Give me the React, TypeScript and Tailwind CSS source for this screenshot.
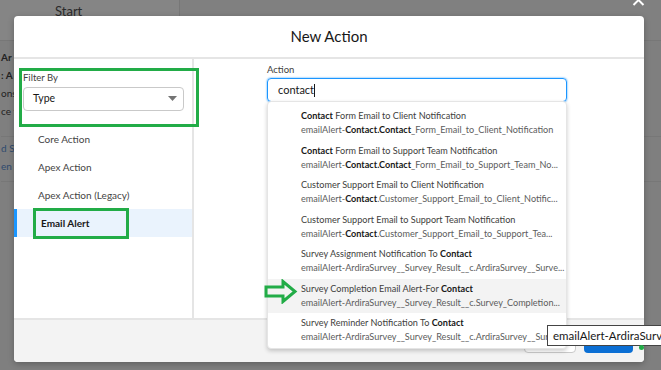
import React from "react";

const items: { title: React.ReactNode; sub: React.ReactNode; active?: boolean }[] = [
  {
    title: (<><b className="font-bold text-[#181818]">Contact</b> Form Email to Client Notification</>),
    sub: (<>emailAlert-<b className="font-bold text-[#181818]">Contact.Contact</b>_Form_Email_to_Client_Notification</>),
  },
  {
    title: (<><b className="font-bold text-[#181818]">Contact</b> Form Email to Support Team Notification</>),
    sub: (<>emailAlert-<b className="font-bold text-[#181818]">Contact.Contact</b>_Form_Email_to_Support_Team_No...</>),
  },
  {
    title: <>Customer Support Email to Client Notification</>,
    sub: (<>emailAlert-<b className="font-bold text-[#181818]">Contact</b>.Customer_Support_Email_to_Client_Notific...</>),
  },
  {
    title: <>Customer Support Email to Support Team Notification</>,
    sub: (<>emailAlert-<b className="font-bold text-[#181818]">Contact</b>.Customer_Support_Email_to_Support_Tea...</>),
  },
  {
    title: (<>Survey Assignment Notification To <b className="font-bold text-[#181818]">Contact</b></>),
    sub: <>emailAlert-ArdiraSurvey__Survey_Result__c.ArdiraSurvey__Surve...</>,
  },
  {
    title: (<>Survey Completion Email Alert-For <b className="font-bold text-[#181818]">Contact</b></>),
    sub: <>emailAlert-ArdiraSurvey__Survey_Result__c.Survey_Completion...</>,
    active: true,
  },
  {
    title: (<>Survey Reminder Notification To <b className="font-bold text-[#181818]">Contact</b></>),
    sub: <>emailAlert-ArdiraSurvey__Survey_Result__c.ArdiraSurvey__Surv</>,
  },
];

export default function App() {
  return (
    <div className="relative w-[661px] h-[370px] overflow-hidden bg-[#7f7f7f] font-['Lato',sans-serif] text-[#3e3e3c]">
      {/* background page */}
      <div className="flex h-[41px] border-b border-[#777]">
        <div className="w-[180px] border-r border-[#777] bg-[#858585] pl-[55px]">
          <span className="block mt-[2px] text-[13px] text-[#2a2a2a]">Start</span>
        </div>
        <div className="flex-1 bg-[#808080]" />
      </div>
      <div className="flex flex-col text-[10px] leading-none text-[#222] pl-[1px]">
        <span className="mt-[11px] font-bold">Ar</span>
        <span className="mt-[8px] font-bold">: A</span>
        <span className="mt-[8px]">ons</span>
        <span className="mt-[8px]">ce f</span>
        <span className="mt-[20px] pt-[6px] border-t border-[#777] text-[#2e4a6e]">d Sc</span>
        <span className="mt-[8px] pb-[10px] border-b border-[#777] text-[#2e4a6e]">en F</span>
      </div>

      {/* close X */}
      <svg className="absolute left-[632px] top-[-6px]" width="13" height="12" viewBox="0 0 13 12">
        <path d="M1.5 1 L11.5 11 M11.5 1 L1.5 11" stroke="#fff" strokeWidth="2" />
      </svg>

      {/* modal */}
      <div className="absolute left-[14px] top-[16px] w-[630px] h-[346px] bg-white rounded-[4px] shadow-[0_2px_6px_rgba(0,0,0,0.25)] flex flex-col">
        <div className="h-[43px] shrink-0 border-b-2 border-[#e5e5e5] flex items-center justify-center text-[15px] text-[#181818]">
          New Action
        </div>
        <div className="flex flex-1 min-h-0">
          {/* left column */}
          <div className="w-[180px] shrink-0 border-r-2 border-[#e5e5e5] pt-[9px]">
            <div className="ml-[5px] w-[180px] h-[59px] border-[3px] border-[#22ac47] pl-[1px] pt-[1px]">
              <div className="text-[9.5px] leading-[12px] text-[#3e3e3c]">Filter By</div>
              <div className="mt-[3px] w-[161px] h-[24px] border border-[#c9c9c9] rounded-[4px] flex items-center justify-between pl-[9px] pr-[6px] text-[10.5px] text-[#181818]">
                <span>Type</span>
                <svg width="9" height="6" viewBox="0 0 9 6"><path d="M0 0 L9 0 L4.5 5 Z" fill="#747474" /></svg>
              </div>
            </div>
            <div className="mt-[-2px] flex flex-col text-[10px] text-[#444]">
              <div className="h-[28px] flex items-center pl-[24px]">Core Action</div>
              <div className="h-[28px] flex items-center pl-[24px]">Apex Action</div>
              <div className="h-[28px] flex items-center pl-[24px]">Apex Action (Legacy)</div>
              <div className="relative h-[28px] flex items-center pl-[16px] bg-[#eaf3fd] border-l-[3px] border-[#1b96ff]">
                <span className="px-[5px] w-[96px] h-[31px] flex items-center border-[3px] border-[#22ac47] font-bold text-[#181818]">Email Alert</span>
              </div>
            </div>
          </div>
          {/* right column */}
          <div className="flex-1 pl-[73px] pt-[5px]">
            <div className="text-[9.5px] leading-[12px] text-[#3e3e3c]">Action</div>
            <div className="relative mt-[2px] w-[300px]">
              <div className="h-[24px] border border-[#1b96ff] rounded-[4px] shadow-[0_0_2px_#1b96ff] flex items-center pl-[10px] text-[11px] text-[#181818]">
                contact<span className="w-px h-[13px] bg-[#181818]" />
              </div>
              <div className="absolute left-0 top-[23px] w-[300px] h-[248px] bg-white rounded-[4px] shadow-[0_2px_4px_rgba(0,0,0,0.2)] border border-[#e5e5e5] pt-[4px] pb-[3px] z-10">
                {items.map((it, i) => (
                  <div key={i} className={"h-[34.5px] flex flex-col justify-center pl-[33px] leading-[14px] text-[9.1px] whitespace-nowrap overflow-hidden " + (it.active ? "bg-[#f3f3f3]" : "")}>
                    <div className="text-[#3e3e3c]">{it.title}</div>
                    <div className="text-[#5c5c5c]">{it.sub}</div>
                  </div>
                ))}
              </div>
            </div>
          </div>
        </div>
        <div className="h-[44px] shrink-0 bg-[#f3f3f3] border-t-2 border-[#e5e5e5] rounded-b-[4px] flex items-center justify-end gap-[8px] pr-[11px]">
          <div className="w-[52px] h-[24px] bg-white border border-[#c9c9c9] rounded-[4px]" />
          <div className="w-[49px] h-[24px] bg-[#0b6fd4] rounded-[4px]" />
        </div>
      </div>

      {/* green arrow */}
      <svg className="absolute left-[264px] top-[279px] z-20" width="34" height="25" viewBox="0 0 34 25">
        <path d="M2 8 L19 8 L19 2.5 L31 12.5 L19 22.5 L19 17 L2 17 Z" fill="none" stroke="#22ac47" strokeWidth="3" strokeLinejoin="miter" />
      </svg>

      {/* tooltip */}
      <div className="absolute left-[547px] top-[325px] h-[21px] w-[130px] bg-white border border-[#444] flex items-center pl-[5px] text-[11.5px] text-[#181818] whitespace-nowrap z-30">
        emailAlert-ArdiraSurvey
      </div>
      <div className="absolute left-[639px] top-[345px] w-[5px] h-[5px] rounded-full bg-[#22ac47] z-30" />
    </div>
  );
}
